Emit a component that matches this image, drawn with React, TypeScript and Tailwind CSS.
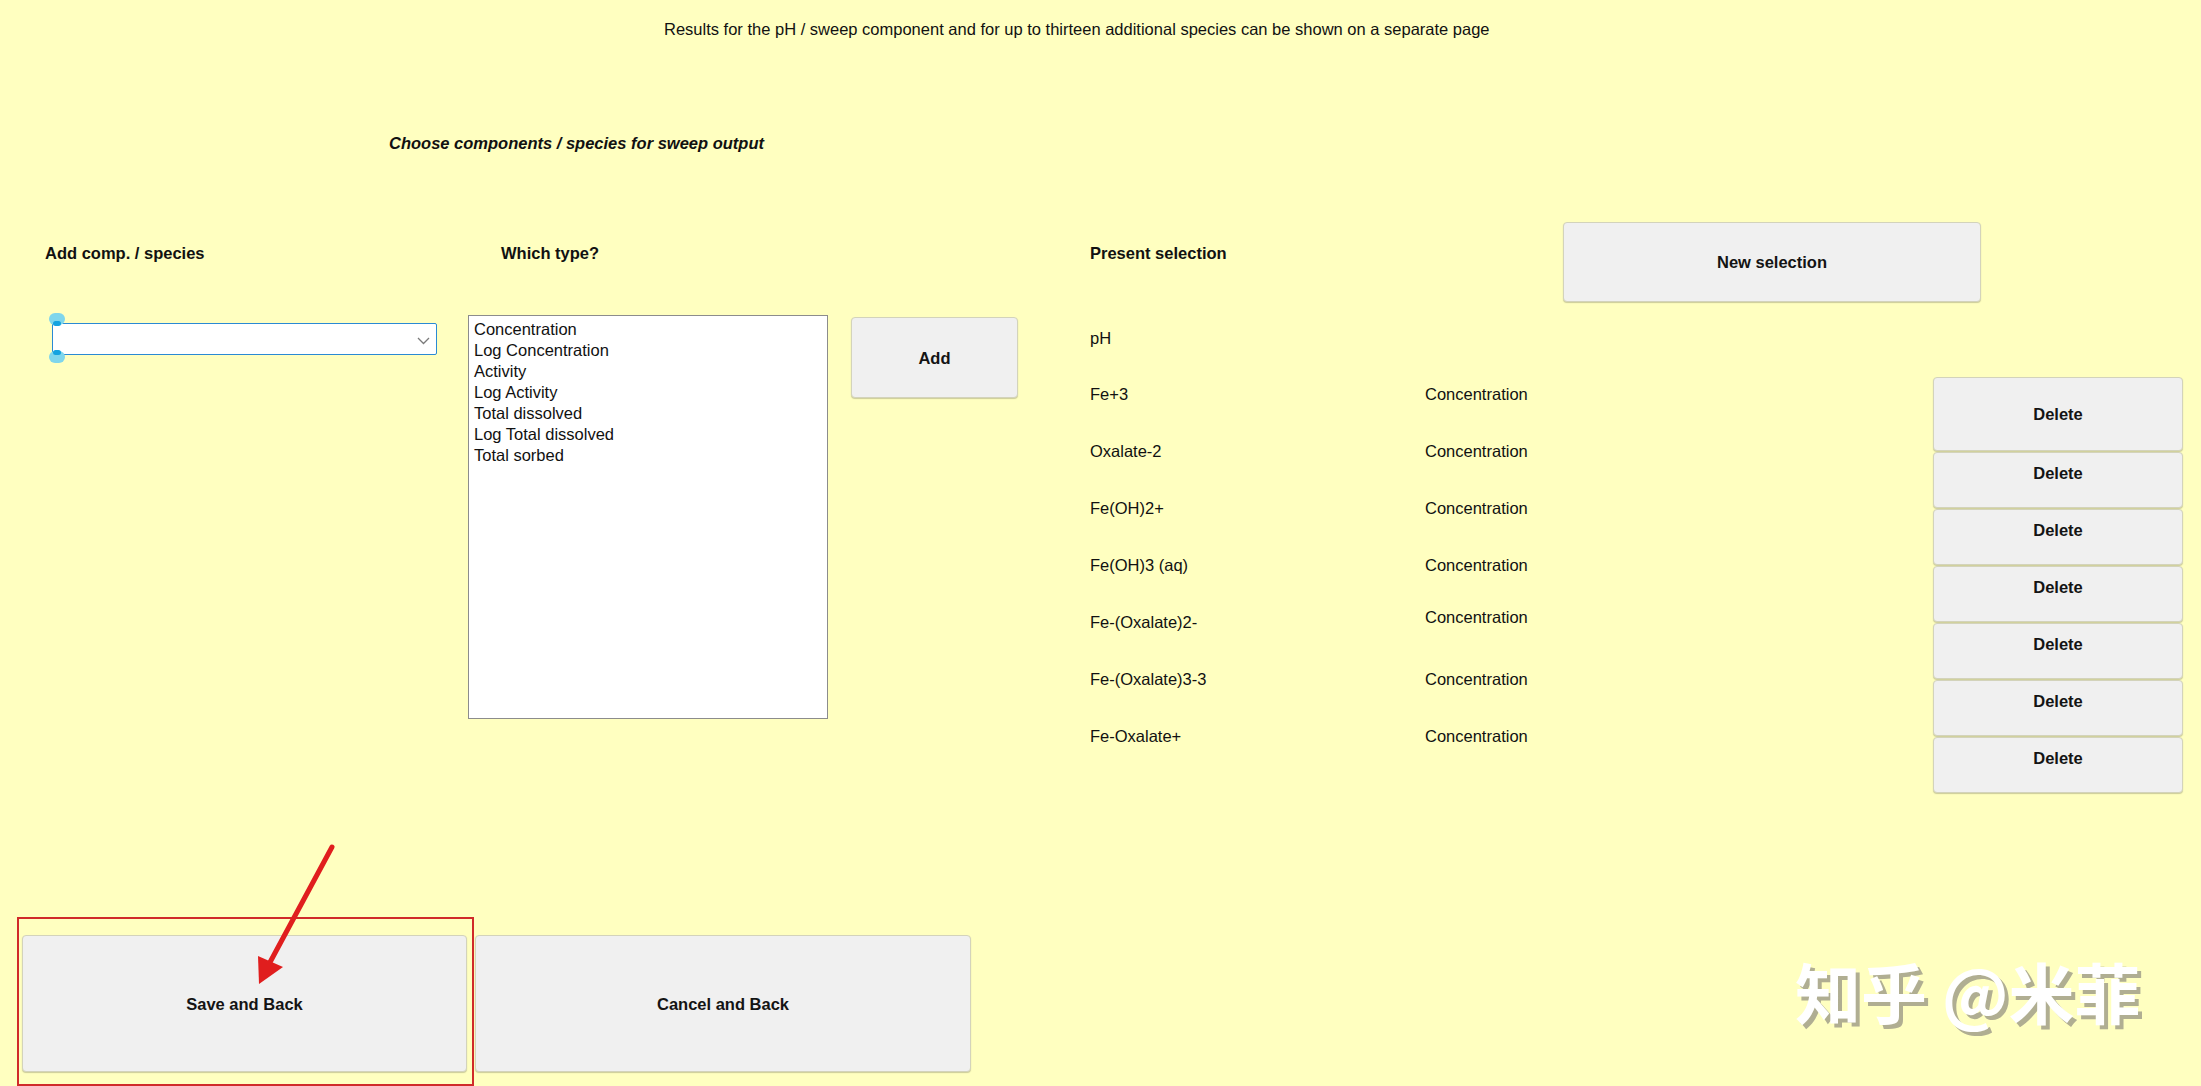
import React from 'react';

const species: { name: string; type: string; lift?: boolean }[] = [
  { name: 'Fe+3', type: 'Concentration' },
  { name: 'Oxalate-2', type: 'Concentration' },
  { name: 'Fe(OH)2+', type: 'Concentration' },
  { name: 'Fe(OH)3 (aq)', type: 'Concentration' },
  { name: 'Fe-(Oxalate)2-', type: 'Concentration', lift: true },
  { name: 'Fe-(Oxalate)3-3', type: 'Concentration' },
  { name: 'Fe-Oxalate+', type: 'Concentration' },
];

const types = [
  'Concentration',
  'Log Concentration',
  'Activity',
  'Log Activity',
  'Total dissolved',
  'Log Total dissolved',
  'Total sorbed',
];

const btn =
  'bg-[#f0f0f0] border border-[#d3d3bb] rounded-[4px] shadow-[0_1px_1px_rgba(110,110,80,0.35)] font-bold text-[16.5px] leading-[18px] text-[#141414] flex justify-center';

export default function App() {
  return (
    <div className="relative w-[2201px] h-[1086px] overflow-hidden bg-[#ffffc0] text-black font-['Liberation_Sans',Arial,sans-serif] text-[16.5px] leading-[18px]">
      {/* title */}
      <div className="pt-[20px] pl-[664px] h-[38px] whitespace-nowrap text-[#111]">
        Results for the pH / sweep component and for up to thirteen additional species can be shown on a separate page
      </div>

      <div className="mt-[96px] pl-[389px] h-[18px] font-bold italic whitespace-nowrap text-[#111]">
        Choose components / species for sweep output
      </div>

      {/* main area */}
      <div className="mt-[68px] flex items-start h-[580px]">
        {/* column A */}
        <div className="ml-[45px] w-[423px] flex flex-col">
          <div className="pt-[24px] font-bold whitespace-nowrap text-[#111]">Add comp. / species</div>
          <div className="relative mt-[61px] ml-[7px] w-[385px] h-[32px] bg-white border-[1.5px] border-[#2a8ad4] rounded-[2px]">
            <svg className="absolute right-[6px] top-[13px]" width="13" height="8" viewBox="0 0 13 8">
              <polyline points="1,1 6.5,6.5 12,1" fill="none" stroke="#7a7a7a" strokeWidth="1.3" />
            </svg>
            <span className="absolute left-[-4px] top-[-11px] w-[16px] h-[12px] rounded-full bg-[#7fd6ec]" />
            <span className="absolute left-[0px] top-[-3px] w-[8px] h-[5px] rounded-full bg-[#14a3e0]" />
            <span className="absolute left-[-4px] top-[27px] w-[16px] h-[12px] rounded-full bg-[#7fd6ec]" />
            <span className="absolute left-[0px] top-[26px] w-[8px] h-[5px] rounded-full bg-[#14a3e0]" />
          </div>
        </div>

        {/* column B */}
        <div className="w-[360px] flex flex-col">
          <div className="pt-[24px] pl-[33px] font-bold whitespace-nowrap text-[#111]">Which type?</div>
          <div className="mt-[53px] h-[404px] bg-white border border-[#8c8c8c] pt-[3px] pl-[5px]">
            {types.map((t) => (
              <div key={t} className="h-[21px] leading-[21px] whitespace-nowrap text-[#111]">
                {t}
              </div>
            ))}
          </div>
        </div>

        {/* column C */}
        <div className={`ml-[23px] mt-[97px] w-[167px] h-[81px] items-center ${btn}`}>Add</div>

        {/* column D */}
        <div className="ml-[72px] w-[1093px] flex flex-col">
          <div className="flex items-start h-[82px]">
            <div className="w-[473px] pt-[24px] font-bold whitespace-nowrap text-[#111]">Present selection</div>
            <div className={`mt-[2px] w-[418px] h-[80px] items-center ${btn}`}>New selection</div>
          </div>
          <div className="mt-[27px] h-[18px] text-[#111]">pH</div>
          <div className="mt-[30px] flex items-start">
            <div className="w-[843px] pt-[8px] flex flex-col">
              {species.map((s) => (
                <div key={s.name} className="h-[57px] flex items-start whitespace-nowrap text-[#111]">
                  <div className="w-[335px]">{s.name}</div>
                  <div className={s.lift ? 'mt-[-5px]' : ''}>{s.type}</div>
                </div>
              ))}
            </div>
            <div className="w-[250px] flex flex-col gap-[1px]">
              <div className={`h-[74px] items-center ${btn}`}>Delete</div>
              {species.slice(1).map((s) => (
                <div key={s.name} className={`h-[56px] items-start pt-[11px] ${btn}`}>
                  Delete
                </div>
              ))}
            </div>
          </div>
        </div>
      </div>

      {/* bottom buttons */}
      <div className="mt-[135px] flex pl-[22px] gap-[8px]">
        <div className={`w-[445px] h-[137px] items-center ${btn}`}>Save and Back</div>
        <div className={`w-[496px] h-[137px] items-center ${btn}`}>Cancel and Back</div>
      </div>

      {/* annotation: red frame */}
      <div className="absolute left-[17px] top-[917px] w-[457px] h-[169px] border-[2.5px] border-[#d02a2a] pointer-events-none" />

      {/* annotation: red arrow */}
      <svg className="absolute left-0 top-0 pointer-events-none" width="2201" height="1086" viewBox="0 0 2201 1086">
        <line x1="332" y1="847" x2="268" y2="966" stroke="#e01e1e" strokeWidth="5" strokeLinecap="round" />
        <polygon points="259,984 258,956 283,967" fill="#e01e1e" />
      </svg>

      {/* watermark */}
      <div className="absolute left-[1795px] top-[950px] whitespace-nowrap font-bold text-white text-[66px] leading-[80px] font-['Noto_Sans_CJK_SC','Noto_Sans',sans-serif] [text-shadow:4px_4px_0_#b0ae92]">
        知乎 @米菲
      </div>
    </div>
  );
}
